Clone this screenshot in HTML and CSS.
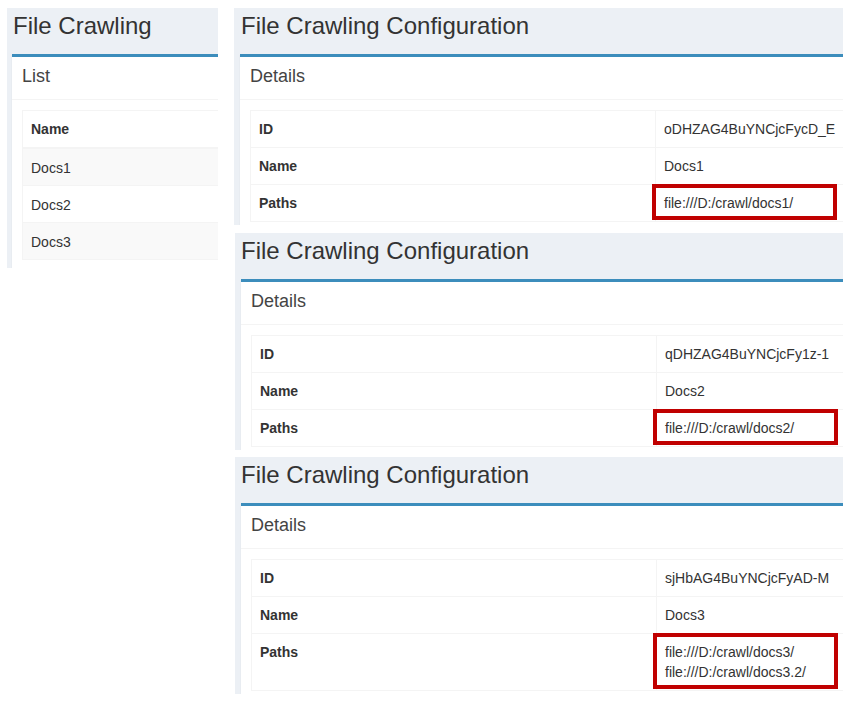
FILE: index.html
```html
<!DOCTYPE html>
<html>
<head>
<meta charset="utf-8">
<link rel="stylesheet" href="styles.css">
</head>
<body>
<div class="page">
  <section class="panel panel-list">
    <h1 class="title">File Crawling</h1>
    <div class="box box-list">
      <div class="box-header"><h3>List</h3></div>
      <div class="box-body">
        <table class="table striped">
          <thead><tr><th>Name</th></tr></thead>
          <tbody>
            <tr><td>Docs1</td></tr>
            <tr><td>Docs2</td></tr>
            <tr><td>Docs3</td></tr>
          </tbody>
        </table>
      </div>
    </div>
  </section>

  <div class="col">
    <section class="panel panel-cfg p1">
      <h1 class="title">File Crawling Configuration</h1>
      <div class="box box-cfg">
        <div class="box-header"><h3>Details</h3></div>
        <div class="box-body">
          <table class="table detail">
            <tr><th>ID</th><td>oDHZAG4BuYNCjcFycD_E</td></tr>
            <tr><th>Name</th><td>Docs1</td></tr>
            <tr><th>Paths</th><td class="marked"><span class="mark"></span>file:///D:/crawl/docs1/</td></tr>
          </table>
        </div>
      </div>
    </section>

    <section class="panel panel-cfg p2">
      <h1 class="title">File Crawling Configuration</h1>
      <div class="box box-cfg">
        <div class="box-header"><h3>Details</h3></div>
        <div class="box-body">
          <table class="table detail">
            <tr><th>ID</th><td>qDHZAG4BuYNCjcFy1z-1</td></tr>
            <tr><th>Name</th><td>Docs2</td></tr>
            <tr><th>Paths</th><td class="marked"><span class="mark"></span>file:///D:/crawl/docs2/</td></tr>
          </table>
        </div>
      </div>
    </section>

    <section class="panel panel-cfg p3">
      <h1 class="title">File Crawling Configuration</h1>
      <div class="box box-cfg">
        <div class="box-header"><h3>Details</h3></div>
        <div class="box-body">
          <table class="table detail">
            <tr><th>ID</th><td>sjHbAG4BuYNCjcFyAD-M</td></tr>
            <tr><th>Name</th><td>Docs3</td></tr>
            <tr><th>Paths</th><td class="marked"><span class="mark"></span>file:///D:/crawl/docs3/<br>file:///D:/crawl/docs3.2/</td></tr>
          </table>
        </div>
      </div>
    </section>
  </div>
</div>
</body>
</html>
```

FILE: styles.css
```css
html, body {
  margin: 0;
  padding: 0;
  background: #ffffff;
}

body {
  font-family: "Liberation Sans", Arial, Helvetica, sans-serif;
  font-size: 14px;
  color: #333333;
}

.page {
  display: flex;
  align-items: flex-start;
  padding-top: 8px;
}

.panel {
  background: #ecf0f5;
  overflow: hidden;
  box-sizing: border-box;
}

.panel-list {
  margin-left: 7px;
  width: 211px;
  height: 260px;
}

.col {
  display: flex;
  flex-direction: column;
  margin-left: 16px;
}

.p1 {
  width: 609px;
  height: 217px;
}

.p2 {
  width: 608px;
  height: 217px;
  margin-top: 8px;
  margin-left: 1px;
}

.p3 {
  width: 608px;
  height: 237px;
  margin-top: 7px;
  margin-left: 1px;
}

.title {
  margin: 0;
  height: 46px;
  box-sizing: border-box;
  padding: 5px 0 0 6px;
  font-size: 24px;
  line-height: 26px;
  font-weight: normal;
  color: #333333;
  white-space: nowrap;
}

.panel-cfg .title {
  padding-left: 7px;
}

.p2 .title,
.p3 .title {
  padding-left: 6px;
}

.box {
  background: #ffffff;
  border-top: 3px solid #3c8dbc;
  box-shadow: 0 1px 1px rgba(0, 0, 0, 0.1);
}

.box-list {
  margin-left: 5px;
  width: 320px;
}

.box-cfg {
  margin-left: 6px;
  width: 720px;
}

.box-header {
  border-bottom: 1px solid #f4f4f4;
  padding: 8px 10px 12px;
}

.box-header h3 {
  margin: 0;
  font-size: 18px;
  line-height: 22px;
  font-weight: normal;
  color: #444444;
}

.box-body {
  padding: 10px;
}

.table {
  border-collapse: collapse;
  border: 1px solid #f4f4f4;
  width: 100%;
}

.table th,
.table td {
  border: 1px solid #f4f4f4;
  padding: 8px;
  line-height: 20px;
  text-align: left;
  vertical-align: top;
  font-size: 14px;
  color: #333333;
}

.table th {
  font-weight: bold;
}

.table thead th {
  border-bottom-width: 2px;
}

.striped tbody td {
  padding-top: 9px;
  padding-bottom: 7px;
}

.striped tbody tr:nth-child(odd) td {
  background: #f9f9f9;
}

.detail th {
  width: 388px;
}

.marked {
  position: relative;
}

.mark {
  position: absolute;
  left: -4px;
  top: -1px;
  width: 185px;
  bottom: 1px;
  border: 4px solid #c00000;
  box-sizing: border-box;
}
```
